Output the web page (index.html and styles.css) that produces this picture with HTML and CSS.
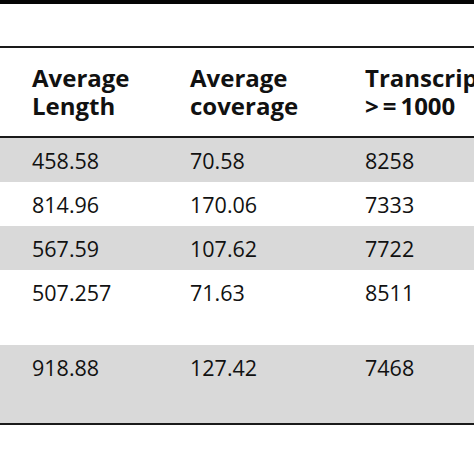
FILE: index.html
```html
<!DOCTYPE html>
<html>
<head>
<meta charset="utf-8">
<link rel="stylesheet" href="styles.css">
</head>
<body>
<div class="frame">
  <div class="topbar"></div>
  <table class="data">
    <colgroup>
      <col class="c1"><col class="c2"><col class="c3">
    </colgroup>
    <thead>
      <tr>
        <th>Average<br>Length</th>
        <th>Average<br>coverage</th>
        <th>Transcripts<br>&gt;&#8201;=&#8201;1000</th>
      </tr>
    </thead>
    <tbody>
      <tr class="shade"><td>458.58</td><td>70.58</td><td>8258</td></tr>
      <tr><td>814.96</td><td>170.06</td><td>7333</td></tr>
      <tr class="shade"><td>567.59</td><td>107.62</td><td>7722</td></tr>
      <tr class="tall"><td>507.257</td><td>71.63</td><td>8511</td></tr>
      <tr class="shade taller"><td>918.88</td><td>127.42</td><td>7468</td></tr>
    </tbody>
  </table>
</div>
</body>
</html>
```
FILE: styles.css
```css
html, body {
  margin: 0;
  padding: 0;
  background: #ffffff;
}

.frame {
  width: 474px;
  height: 474px;
  overflow: hidden;
  font-family: "Open Sans", "Noto Sans", sans-serif;
  color: #111111;
}

.topbar {
  height: 4px;
  background: #050505;
}

.data {
  margin-top: 42px;
  width: 600px;
  table-layout: fixed;
  border-collapse: collapse;
  border-top: 2px solid #1a1a1a;
  border-bottom: 2px solid #1a1a1a;
}

.c1 { width: 190px; }
.c2 { width: 175px; }
.c3 { width: 235px; }

.data th,
.data td {
  text-align: left;
  vertical-align: top;
  white-space: nowrap;
  padding: 0;
}

.data th:first-child,
.data td:first-child {
  padding-left: 32px;
}

.data thead tr {
  border-bottom: 2px solid #1a1a1a;
}

.data th {
  font-weight: 700;
  font-size: 24px;
  line-height: 28px;
  padding-top: 16px;
  padding-bottom: 16px;
}

.data td {
  font-size: 21.5px;
  line-height: 30px;
  padding-top: 8px;
  padding-bottom: 6px;
}

.data tr.shade td {
  background: #d9d9d9;
}

.data tr.tall td {
  padding-bottom: 37px;
}

.data tr.taller td {
  padding-bottom: 40px;
}
```
